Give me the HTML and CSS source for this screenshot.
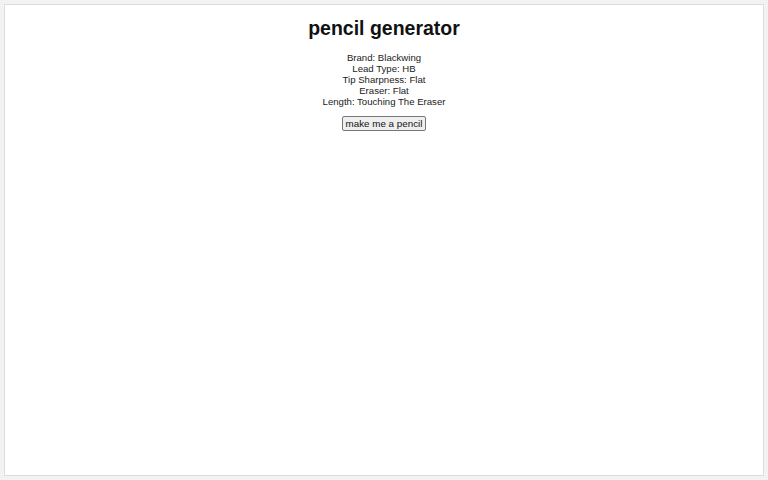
FILE: index.html
```html
<!DOCTYPE html>
<html lang="en">
<head>
  <meta charset="UTF-8" />
  <title>pencil generator</title>
  <link rel="stylesheet" href="styles.css">
</head>
<body>
  <div class="frame">
    <h1>pencil generator</h1>
    <div class="pencil" id="pencil">
      <div>Brand: Blackwing</div>
      <div>Lead Type: HB</div>
      <div>Tip Sharpness: Flat</div>
      <div>Eraser: Flat</div>
      <div>Length: Touching The Eraser</div>
    </div>
    <button id="make-btn">make me a pencil</button>
  </div>
</body>
</html>
```
FILE: styles.css
```css
html, body {
  margin: 0;
  height: 100%;
}

body {
  font-family: 'Liberation Sans', Arial, sans-serif;
  background-color: #f2f2f2;
  padding: 4px;
  box-sizing: border-box;
  color: #222;
}

.frame {
  background: white;
  border: 1px solid #dcdcdc;
  height: 100%;
  box-sizing: border-box;
  text-align: center;
}

h1 {
  font-size: 19.5px;
  margin: 12px 0 12px;
  color: #111;
}

.pencil {
  font-size: 9.6px;
  line-height: 11px;
}

button {
  margin-top: 9px;
  font-family: 'Liberation Sans', Arial, sans-serif;
  font-size: 9.8px;
  padding: 1px 3px;
  background: #efefef;
  border: 1px solid #767676;
  border-radius: 2px;
  color: #111;
}
```
